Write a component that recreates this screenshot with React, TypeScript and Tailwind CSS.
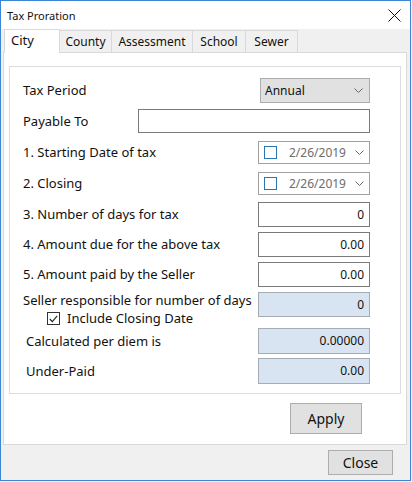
import React from "react";

function Chevron() {
  return (
    <svg width="9" height="5" viewBox="0 0 9 5" className="shrink-0">
      <path d="M0.5 0.5 L4.5 4.5 L8.5 0.5" fill="none" stroke="#666" strokeWidth="1" />
    </svg>
  );
}

function Row({ label, mt, h, pl = "pl-[13px]", children }: { label: string; mt: string; h: string; pl?: string; children: React.ReactNode }) {
  return (
    <div className={`flex items-center justify-between ${mt} ${h} ${pl}`}>
      <span className="text-[13px]">{label}</span>
      {children}
    </div>
  );
}

function NumBox({ value, h = "h-[25px]", shaded = false }: { value: string; h?: string; shaded?: boolean }) {
  return (
    <div
      className={`w-[112px] ${h} border flex items-center justify-end pr-[5px] ${
        shaded ? "bg-[#d8e4f1] border-[#a5acb5]" : "bg-white border-[#7a7a7a]"
      }`}
    >
      {value}
    </div>
  );
}

function DatePicker({ value }: { value: string }) {
  return (
    <div className="w-[112px] h-[23px] border border-[#a0a0a0] bg-white flex items-center pl-[5px] pr-[5px]">
      <span className="w-[13px] h-[13px] border border-[#2a73b5]" />
      <span className="ml-[12px] text-[#6d6d6d] flex-1">{value}</span>
      <Chevron />
    </div>
  );
}

function Tab({ label, active = false, w }: { label: string; active?: boolean; w: string }) {
  if (active)
    return (
      <div className={`${w} h-[24px] -mb-px bg-white border border-b-0 border-[#d9d9d9] flex items-center pl-[6px] pb-[3px] relative z-10 text-[13px]`}>
        {label}
      </div>
    );
  return (
    <div className={`${w} h-[22px] -ml-px bg-[#f0f0f0] border border-b-0 border-[#d9d9d9] flex items-center justify-center pt-[1px]`}>
      {label}
    </div>
  );
}

export default function App() {
  return (
    <div className="w-[412px] h-[482px] bg-[#f0f0f0] font-['Noto_Sans',sans-serif] text-[12px] text-[#111] leading-none">
      <div className="w-[411px] h-[481px] border border-[#3b86d5] flex flex-col">
        {/* title bar */}
        <div className="h-[28px] bg-white flex items-center justify-between pl-[6px] pr-[9px] shrink-0">
          <span className="text-[11px]">Tax Proration</span>
          <svg width="13" height="13" viewBox="0 0 13 13">
            <path d="M0.5 0.5 L12.5 12.5 M12.5 0.5 L0.5 12.5" stroke="#111" strokeWidth="1" />
          </svg>
        </div>

        {/* tab control */}
        <div className="ml-[2px] w-[404px] flex flex-col">
          <div className="h-[23px] flex items-end pl-px">
            <Tab label="City" active w="w-[56px]" />
            <Tab label="County" w="w-[53px]" />
            <Tab label="Assessment" w="w-[82px]" />
            <Tab label="School" w="w-[54px]" />
            <Tab label="Sewer" w="w-[53px]" />
          </div>
          <div className="h-[393px] bg-white border border-[#d9d9d9] flex flex-col">
            <div className="mt-[13px] ml-[5px] w-[392px] h-[328px] border border-[#dcdcdc] flex flex-col pr-[30px]">
              <Row label="Tax Period" mt="mt-[11px]" h="h-[25px]">
                <div className="w-[110px] h-[25px] border border-[#adadad] bg-[#e1e1e1] flex items-center justify-between pl-[4px] pr-[6px]">
                  <span>Annual</span>
                  <Chevron />
                </div>
              </Row>
              <Row label="Payable To" mt="mt-[6px]" h="h-[24px]">
                <div className="w-[232px] h-[24px] border border-[#7a7a7a] bg-white" />
              </Row>
              <Row label="1. Starting Date of tax" mt="mt-[8px]" h="h-[23px]">
                <DatePicker value="2/26/2019" />
              </Row>
              <Row label="2. Closing" mt="mt-[8px]" h="h-[23px]">
                <DatePicker value="2/26/2019" />
              </Row>
              <Row label="3. Number of days for tax" mt="mt-[7px]" h="h-[25px]">
                <NumBox value="0" />
              </Row>
              <Row label="4. Amount due for the above tax" mt="mt-[5px]" h="h-[25px]">
                <NumBox value="0.00" />
              </Row>
              <Row label="5. Amount paid by the Seller" mt="mt-[5px]" h="h-[25px]">
                <NumBox value="0.00" />
              </Row>
              <div className="mt-[5px] flex justify-between pl-[13px]">
                <div className="flex flex-col text-[13px]">
                  <span className="mt-[2px]">Seller responsible for number of days</span>
                  <label className="mt-[5px] ml-[24px] flex items-center gap-[7px]">
                    <span className="w-[13px] h-[13px] border border-[#333] flex items-center justify-center">
                      <svg width="9" height="8" viewBox="0 0 9 8">
                        <path d="M0.8 4 L3.3 6.6 L8.2 0.8" fill="none" stroke="#222" strokeWidth="1.1" />
                      </svg>
                    </span>
                    <span>Include Closing Date</span>
                  </label>
                </div>
                <NumBox value="0" shaded />
              </div>
              <Row label="Calculated per diem is" mt="mt-[3px]" h="h-[26px]" pl="pl-[16px]">
                <NumBox value="0.00000" h="h-[26px]" shaded />
              </Row>
              <Row label="Under-Paid" mt="mt-[4px]" h="h-[26px]" pl="pl-[16px]">
                <NumBox value="0.00" h="h-[26px]" shaded />
              </Row>
            </div>
            <div className="mt-[9px] flex justify-end pr-[44px]">
              <button className="w-[72px] h-[31px] border border-[#adadad] bg-[#e1e1e1] text-[14px]">Apply</button>
            </div>
          </div>
        </div>

        {/* footer */}
        <div className="flex justify-end pt-[5px] pr-[17px]">
          <button className="w-[65px] h-[25px] border border-[#adadad] bg-[#e1e1e1] text-[14px]">Close</button>
        </div>
      </div>
    </div>
  );
}
